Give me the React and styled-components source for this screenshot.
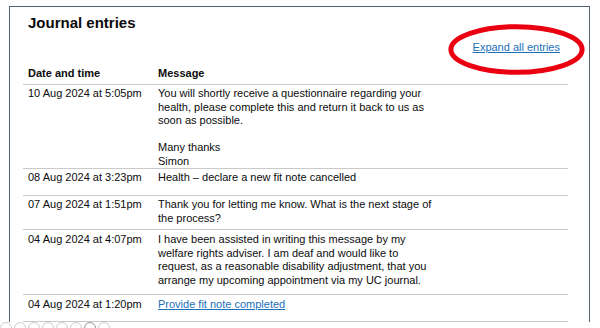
import React from 'react';
import styled, { createGlobalStyle } from 'styled-components';

const GlobalStyle = createGlobalStyle`
  html, body {
    margin: 0;
    padding: 0;
    background: #ffffff;
  }
  body {
    font-family: "Liberation Sans", Arial, sans-serif;
    color: #0b0c0c;
  }
`;

const entries = [
  {
    date: '10 Aug 2024 at 5:05pm',
    padBottom: 0,
    lines: [
      'You will shortly receive a questionnaire regarding your health, please complete this and return it back to us as soon as possible.',
      'Many thanks\nSimon',
    ],
  },
  { date: '08 Aug 2024 at 3:23pm', padBottom: 4, lines: ['Health \u2013 declare a new fit note cancelled'] },
  { date: '07 Aug 2024 at 1:51pm', padBottom: 4, lines: ['Thank you for letting me know. What is the next stage of the process?'] },
  {
    date: '04 Aug 2024 at 4:07pm',
    padBottom: 7,
    padTop: 3,
    lines: [
      'I have been assisted in writing this message by my welfare rights adviser. I am deaf and would like to request, as a reasonable disability adjustment, that you arrange my upcoming appointment via my UC journal.',
    ],
  },
  { date: '04 Aug 2024 at 1:20pm', padBottom: 4, padTop: 3, link: 'Provide fit note completed' },
];

const Page = styled.div`
  width: 600px;
  height: 328px;
  overflow: hidden;
`;

const Panel = styled.section`
  position: relative;
  margin: 6px 0 0 9px;
  width: 581px;
  box-sizing: border-box;
  border: 1px solid #56636f;
  border-bottom: none;
  padding: 7px 21px 0 13px;
`;

const Title = styled.h2`
  margin: 0;
  padding-left: 5px;
  font-size: 15px;
  line-height: 18px;
  font-weight: 700;
`;

const LinkRow = styled.div`
  display: flex;
  justify-content: flex-end;
  padding-right: 8px;
  margin-top: 9px;
  font-size: 11px;
  line-height: 13.5px;
`;

const Link = styled.a`
  color: #1d70b8;
  text-decoration: underline;
  text-underline-offset: 1px;
  cursor: pointer;
`;

const Table = styled.div`
  margin-top: 12px;
  display: grid;
  grid-template-columns: 130px 1fr;
  font-size: 11px;
  line-height: 13.5px;
`;

const Row = styled.div`
  display: contents;
`;

const HeadCell = styled.div`
  padding: 0 0 4px 5px;
  border-bottom: 1px solid #cacaca;
  font-weight: 700;
`;

const Cell = styled.div`
  box-sizing: border-box;
  padding: ${(p) => `${p.$top}px 0 ${p.$bottom}px 5px`};
  min-height: 27px;
  border-bottom: 1px solid #cacaca;
`;

const Message = styled.div`
  max-width: 276px;
  white-space: pre-line;

  & + & {
    margin-top: 13.5px;
  }
`;

const Ring = styled.svg`
  position: absolute;
  left: 438px;
  top: 17px;
  pointer-events: none;
`;

const Dock = styled.div`
  display: flex;
  gap: 2px;
`;

const Dot = styled.span`
  width: 12px;
  height: 12px;
  box-sizing: border-box;
  border-radius: 50%;
  border: 1px solid ${(p) => (p.$dark ? '#9a9a9a' : '#cdcdcd')};
  flex: none;
`;

export default function App() {
  return (
    <Page>
      <GlobalStyle />
      <Panel>
        <Title>Journal entries</Title>
        <LinkRow>
          <Link>Expand all entries</Link>
        </LinkRow>
        <Table>
          <Row>
            <HeadCell>Date and time</HeadCell>
            <HeadCell>Message</HeadCell>
          </Row>
          {entries.map((e) => {
            const top = e.padTop ?? 2;
            return (
              <Row key={e.date + (e.link || '')}>
                <Cell $top={top} $bottom={e.padBottom}>{e.date}</Cell>
                <Cell $top={top} $bottom={e.padBottom}>
                  {e.link ? (
                    <Link>{e.link}</Link>
                  ) : (
                    e.lines.map((l) => <Message key={l}>{l}</Message>)
                  )}
                </Cell>
              </Row>
            );
          })}
        </Table>
        <Ring width="137" height="51" viewBox="0 0 137 51">
          <ellipse cx="68.5" cy="25.5" rx="65.6" ry="22.8" fill="none" stroke="#ea0010" strokeWidth="5" />
        </Ring>
      </Panel>
      <Dock>
        {Array.from({ length: 8 }).map((_, i) => (
          <Dot key={i} $dark={i === 6} />
        ))}
      </Dock>
    </Page>
  );
}
